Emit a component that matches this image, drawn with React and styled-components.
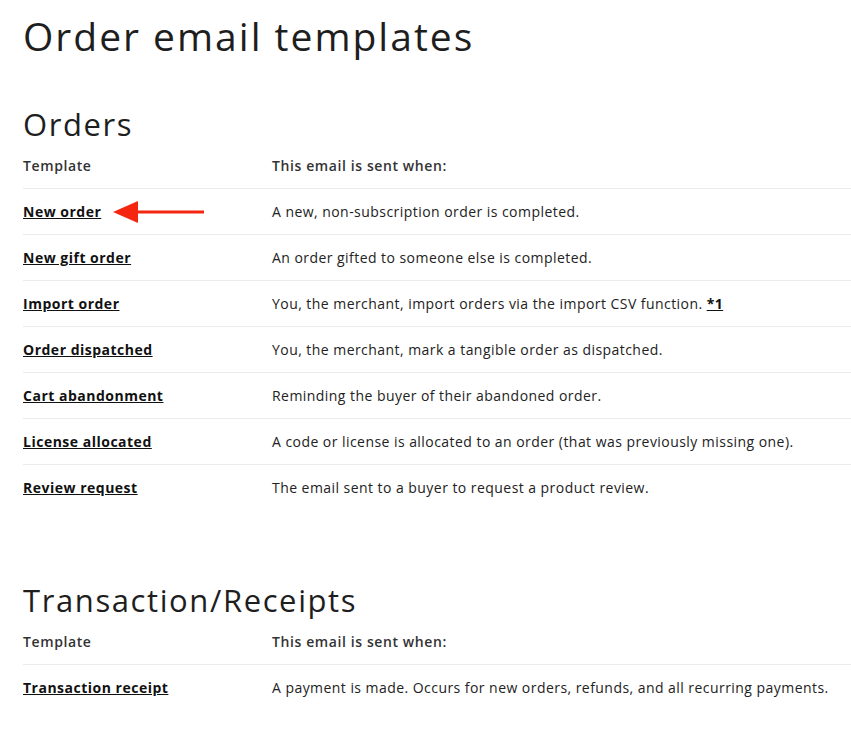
import styled, { createGlobalStyle } from "styled-components";

const Global = createGlobalStyle`
  body {
    margin: 0;
    background: #fff;
    font-family: "Open Sans", "Liberation Sans", sans-serif;
    color: #222;
  }
`;

const Page = styled.div`
  padding: 0 0 0 23px;
`;

const Title = styled.h1`
  margin: 0;
  padding-top: 12px;
  font-weight: 400;
  font-size: 39px;
  line-height: 48px;
  letter-spacing: 2px;
  color: #1e1e1e;
`;

const SectionTitle = styled.h2`
  margin: ${(p) => (p.first ? "46px" : "72px")} 0 0;
  font-weight: 400;
  font-size: 31px;
  line-height: 37px;
  letter-spacing: 1.6px;
  color: #1e1e1e;
`;

const Table = styled.div`
  display: grid;
  grid-template-columns: 249px 1fr;
`;

const Row = styled.div`
  display: contents;
  & > * {
    height: 45px;
    display: flex;
    align-items: center;
    border-bottom: ${(p) => (p.last ? "none" : "1px solid #ebebeb")};
  }
`;

const Head = styled.div`
  font-size: 14px;
  font-weight: 600;
  letter-spacing: 0.6px;
  color: #333;
`;

const Cell = styled.div`
  font-size: 14px;
  letter-spacing: 0.45px;
  color: #222;
  gap: 12px;
`;

const Link = styled.a`
  font-size: 14px;
  font-weight: 700;
  letter-spacing: 0.5px;
  color: #111;
  text-decoration: underline;
`;

const Note = styled.a`
  font-weight: 700;
  color: #111;
  text-decoration: underline;
  margin-left: 4px;
`;

const Arrow = () => (
  <svg width="92" height="22" viewBox="0 0 92 22">
    <polygon points="0,11 25,0 25,22" fill="#f4260f" />
    <rect x="20" y="9.5" width="71" height="3" fill="#f4260f" />
  </svg>
);

const orders = [
  ["New order", "A new, non-subscription order is completed."],
  ["New gift order", "An order gifted to someone else is completed."],
  ["Import order", "You, the merchant, import orders via the import CSV function."],
  ["Order dispatched", "You, the merchant, mark a tangible order as dispatched."],
  ["Cart abandonment", "Reminding the buyer of their abandoned order."],
  ["License allocated", "A code or license is allocated to an order (that was previously missing one)."],
  ["Review request", "The email sent to a buyer to request a product review."],
];

export default function App() {
  return (
    <Page>
      <Global />
      <Title>Order email templates</Title>
      <SectionTitle first>Orders</SectionTitle>
      <Table>
        <Row>
          <Head>Template</Head>
          <Head>This email is sent when:</Head>
        </Row>
        {orders.map(([name, desc], i) => (
          <Row key={name} last={i === orders.length - 1}>
            <Cell>
              <Link href="#">{name}</Link>
              {i === 0 && <Arrow />}
            </Cell>
            <Cell>
              <span>
                {desc}
                {name === "Import order" && <Note href="#">*1</Note>}
              </span>
            </Cell>
          </Row>
        ))}
      </Table>
      <SectionTitle>Transaction/Receipts</SectionTitle>
      <Table>
        <Row>
          <Head>Template</Head>
          <Head>This email is sent when:</Head>
        </Row>
        <Row last>
          <Cell>
            <Link href="#">Transaction receipt</Link>
          </Cell>
          <Cell>A payment is made. Occurs for new orders, refunds, and all recurring payments.</Cell>
        </Row>
      </Table>
    </Page>
  );
}
